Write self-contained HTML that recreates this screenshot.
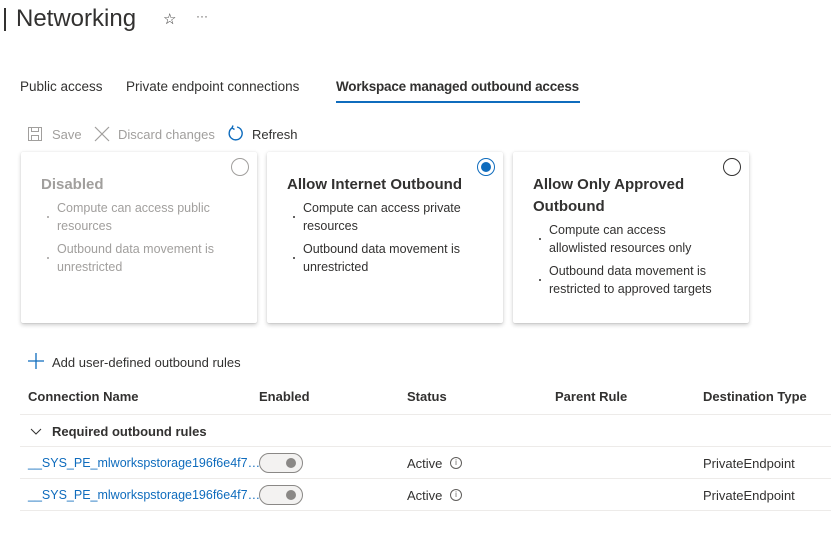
<!DOCTYPE html>
<html><head><style>
body{margin:0;width:831px;height:542px;background:#fff;font-family:"Liberation Sans",sans-serif;color:#323130;position:relative;overflow:hidden;font-size:13px}
.a{position:absolute;white-space:nowrap}
.card{position:absolute;top:152px;width:236px;height:171px;background:#fff;box-shadow:0 1.6px 4px rgba(0,0,0,.2),0 0.3px 1px rgba(0,0,0,.1);border-radius:2px}
.card h3{position:absolute;left:20px;top:22px;margin:0;font-size:15px;font-weight:bold;line-height:22px;color:#323130}
.card ul{position:absolute;left:20px;margin:0;padding:0;list-style:none;font-size:12.5px;line-height:18px;width:190px}
.card li{position:relative;padding-left:16px;margin-bottom:5px}
.card li:before{content:"";position:absolute;left:6px;top:17px;width:2px;height:2px;background:#323130;border-radius:1px}
.dis h3,.dis ul{color:#a19f9d}.dis li:before{background:#a19f9d}
.radio{position:absolute;right:8px;top:6px;width:18px;height:18px;border:1px solid #323130;border-radius:50%;box-sizing:border-box}
.line{position:absolute;left:20px;width:811px;height:1px;background:#edebe9}
.tog{position:absolute;left:259px;width:44px;height:20px;border:1px solid #8a8886;border-radius:10px;background:#f3f2f1;box-sizing:border-box}
.tog:after{content:"";position:absolute;right:6px;top:4px;width:10px;height:10px;border-radius:50%;background:#8a8886}
.link{color:#0f6cbd;font-size:12.5px}
.info{position:absolute;width:10px;height:10px;border:1px solid #605e5c;border-radius:50%;font-size:8px;line-height:10px;text-align:center;color:#605e5c}
</style></head><body>
<div class="a" style="left:4px;top:8px;width:1.5px;height:23px;background:#323130"></div>
<div class="a" style="left:16px;top:5px;font-size:24px;color:#323130">Networking</div>
<div class="a" style="left:163px;top:10px;font-size:15px">☆</div>
<div class="a" style="left:196px;top:9px;font-size:12px;color:#605e5c">···</div>
<div class="a" style="left:20px;top:79px;font-size:13.5px">Public access</div>
<div class="a" style="left:126px;top:79px;font-size:13.5px">Private endpoint connections</div>
<div class="a" style="left:336px;top:79px;font-size:13.5px;font-weight:bold;letter-spacing:-0.2px">Workspace managed outbound access</div>
<div class="a" style="left:336px;top:101px;width:244px;height:2px;background:#0f6cbd"></div>
<svg class="a" style="left:27px;top:126px" width="16" height="16" viewBox="0 0 16 16" fill="none" stroke="#a19f9d"><rect x="1.5" y="1.5" width="13" height="13"/><rect x="4.5" y="1.5" width="7" height="4"/><rect x="4.5" y="9.5" width="7" height="5"/></svg>
<div class="a" style="left:52px;top:127px;color:#a19f9d">Save</div>
<svg class="a" style="left:94px;top:126px" width="16" height="16" viewBox="0 0 16 16" stroke="#a19f9d" stroke-width="1.2"><path d="M1 1L15 15M15 1L1 15"/></svg>
<div class="a" style="left:118px;top:127px;color:#a19f9d">Discard changes</div>
<svg class="a" style="left:227px;top:125px" width="17" height="17" viewBox="0 0 17 17" fill="none" stroke="#0f6cbd" stroke-width="1.4"><path d="M5 3A6.5 6.5 0 1 0 10 2"/><path d="M6 0.5L5 3L7.5 4.5"/></svg>
<div class="a" style="left:252px;top:127px">Refresh</div>

<div class="card dis" style="left:21px"><div class="radio" style="border-color:#a19f9d"></div><h3>Disabled</h3>
<ul style="top:47px"><li>Compute can access public resources</li><li>Outbound data movement is unrestricted</li></ul></div>
<div class="card" style="left:267px"><div class="radio" style="border-color:#0f6cbd"><div style="position:absolute;left:3px;top:3px;width:10px;height:10px;border-radius:50%;background:#0f6cbd"></div></div><h3>Allow Internet Outbound</h3>
<ul style="top:47px"><li>Compute can access private resources</li><li>Outbound data movement is unrestricted</li></ul></div>
<div class="card" style="left:513px"><div class="radio"></div><h3>Allow Only Approved<br>Outbound</h3>
<ul style="top:69px"><li>Compute can access allowlisted resources only</li><li>Outbound data movement is restricted to approved targets</li></ul></div>

<svg class="a" style="left:28px;top:353px" width="16" height="16" viewBox="0 0 16 16" stroke="#0f6cbd" stroke-width="1.3"><path d="M8 0V16M0 8H16"/></svg>
<div class="a" style="left:52px;top:355px">Add user-defined outbound rules</div>
<div class="a" style="left:28px;top:389px;font-weight:bold;color:#323130">Connection Name</div>
<div class="a" style="left:259px;top:389px;font-weight:bold">Enabled</div>
<div class="a" style="left:407px;top:389px;font-weight:bold">Status</div>
<div class="a" style="left:555px;top:389px;font-weight:bold">Parent Rule</div>
<div class="a" style="left:703px;top:389px;font-weight:bold">Destination Type</div>
<div class="line" style="top:414px"></div>
<svg class="a" style="left:30px;top:428px" width="12" height="8" viewBox="0 0 12 8" fill="none" stroke="#323130"><path d="M1 1L6 6L11 1"/></svg>
<div class="a" style="left:52px;top:424px;font-weight:bold">Required outbound rules</div>
<div class="line" style="top:446px"></div>
<div class="a link" style="left:28px;top:456px">__SYS_PE_mlworkspstorage196f6e4f7…</div>
<div class="tog" style="top:453px"></div>
<div class="a" style="left:407px;top:456px">Active</div><div class="info" style="left:450px;top:457px">i</div>
<div class="a" style="left:703px;top:456px">PrivateEndpoint</div>
<div class="line" style="top:478px"></div>
<div class="a link" style="left:28px;top:488px">__SYS_PE_mlworkspstorage196f6e4f7…</div>
<div class="tog" style="top:485px"></div>
<div class="a" style="left:407px;top:488px">Active</div><div class="info" style="left:450px;top:489px">i</div>
<div class="a" style="left:703px;top:488px">PrivateEndpoint</div>
<div class="line" style="top:510px"></div>
</body></html>
